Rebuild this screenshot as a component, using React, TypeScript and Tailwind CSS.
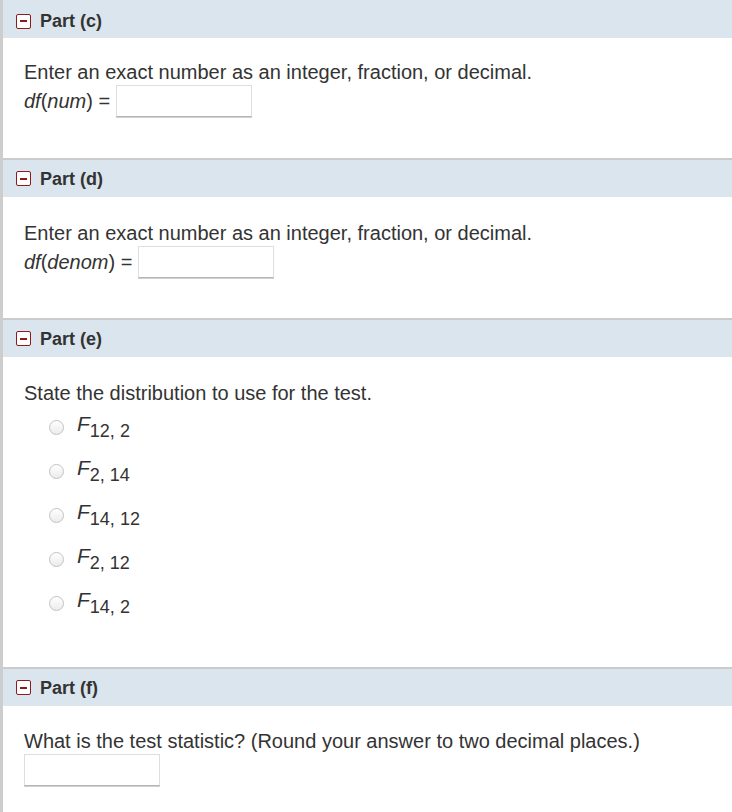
import React from 'react';

const font = { fontFamily: '"Liberation Sans", Arial, Helvetica, sans-serif' };

const MinusBox: React.FC = () => (
  <span className="flex h-[15px] w-[15px] shrink-0 items-center justify-center rounded-[2px] border-[1.5px] border-[#8e1b1b] bg-white">
    <span className="h-[2px] w-[7px] bg-[#8e1b1b]" />
  </span>
);

const Header: React.FC<{ title: string; first?: boolean }> = ({ title, first }) => (
  <div
    className={`flex items-center gap-[9px] bg-[#dbe5ee] pl-[13px] ${
      first ? 'h-[38px] pt-1' : 'h-[37px]'
    }`}
  >
    <MinusBox />
    <span className="text-[18px] font-bold leading-none text-[#333]">{title}</span>
  </div>
);

const AnswerBox: React.FC = () => (
  <div className="h-[32px] w-[136px] border border-[#dedede] border-b-[#b5b5b5] bg-white shadow-[0_1px_0_#d0d0d0]" />
);

const Radio: React.FC<{ a: string; b: string }> = ({ a, b }) => (
  <div className="flex h-[44px] items-center pl-[25px]">
    <span className="h-[15px] w-[15px] rounded-full border border-[#c2c2c2] bg-linear-to-b from-white to-[#ebebeb]" />
    <span className="ml-[13px] flex items-baseline leading-none text-[#333]">
      <span className="relative -top-[4px] text-[21px] italic">F</span>
      <span className="relative top-[2px] text-[18px]">
        {a}, {b}
      </span>
    </span>
  </div>
);

export default function App() {
  return (
    <div style={font} className="min-h-[812px] w-full border-l-[3px] border-[#cdcdcd] bg-white text-[20px] text-[#333]">
      {/* Part (c) */}
      <Header title="Part (c)" first />
      <div className="pb-[41px] pl-[21px] pt-[22px]">
        <p className="leading-[24px]">Enter an exact number as an integer, fraction, or decimal.</p>
        <div className="mt-px flex items-center gap-[6px]">
          <span className="leading-[24px]">
            <i>df</i>(<i>num</i>) =
          </span>
          <AnswerBox />
        </div>
      </div>

      {/* Part (d) */}
      <div className="border-t-2 border-[#cbcbcb]">
        <Header title="Part (d)" />
        <div className="pb-[40px] pl-[21px] pt-6">
          <p className="leading-[24px]">Enter an exact number as an integer, fraction, or decimal.</p>
          <div className="mt-px flex items-center gap-[6px]">
            <span className="leading-[24px]">
              <i>df</i>(<i>denom</i>) =
            </span>
            <AnswerBox />
          </div>
        </div>
      </div>

      {/* Part (e) */}
      <div className="border-t-2 border-[#cbcbcb]">
        <Header title="Part (e)" />
        <div className="pb-[42px] pl-[21px] pt-6">
          <p className="leading-[24px]">State the distribution to use for the test.</p>
          <Radio a="12" b="2" />
          <Radio a="2" b="14" />
          <Radio a="14" b="12" />
          <Radio a="2" b="12" />
          <Radio a="14" b="2" />
        </div>
      </div>

      {/* Part (f) */}
      <div className="border-t-2 border-[#cbcbcb]">
        <Header title="Part (f)" />
        <div className="pb-6 pl-[21px] pt-[23px]">
          <p className="leading-[24px]">
            What is the test statistic? (Round your answer to two decimal places.)
          </p>
          <div className="mt-px">
            <AnswerBox />
          </div>
        </div>
      </div>
    </div>
  );
}
